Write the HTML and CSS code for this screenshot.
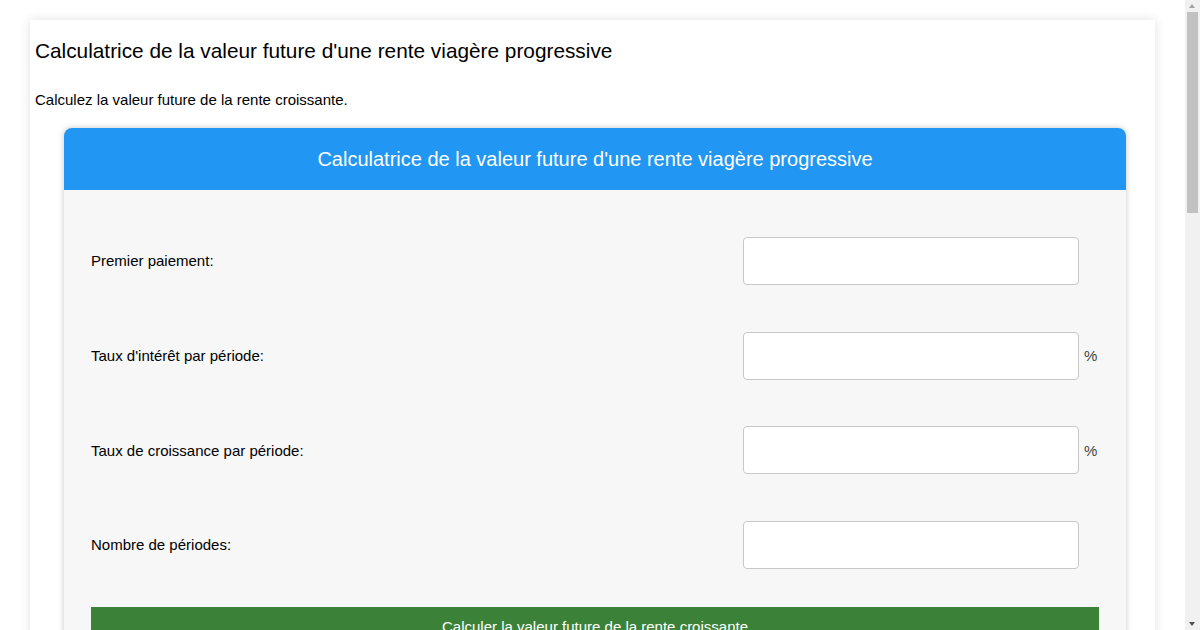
FILE: index.html
```html
<!DOCTYPE html>
<html lang="fr">
<head>
<meta charset="utf-8">
<title>Calculatrice de la valeur future d'une rente viagère progressive</title>
<link rel="stylesheet" href="styles.css">
</head>
<body>
<div class="page">
  <h1 class="title">Calculatrice de la valeur future d'une rente viagère progressive</h1>
  <p class="intro">Calculez la valeur future de la rente croissante.</p>
  <div class="card">
    <div class="card-head">Calculatrice de la valeur future d'une rente viagère progressive</div>
    <div class="card-body">
      <div class="row">
        <label class="label">Premier paiement:</label>
        <div class="field"><input class="input" type="text"><span class="unit"></span></div>
      </div>
      <div class="row">
        <label class="label">Taux d'intérêt par période:</label>
        <div class="field"><input class="input" type="text"><span class="unit">%</span></div>
      </div>
      <div class="row">
        <label class="label">Taux de croissance par période:</label>
        <div class="field"><input class="input" type="text"><span class="unit">%</span></div>
      </div>
      <div class="row">
        <label class="label">Nombre de périodes:</label>
        <div class="field"><input class="input" type="text"><span class="unit"></span></div>
      </div>
      <button class="btn" type="button">Calculer la valeur future de la rente croissante</button>
      <div class="result">
        <div class="row">
          <label class="label">Valeur future:</label>
          <div class="field"><input class="input" type="text"><span class="unit"></span></div>
        </div>
      </div>
    </div>
  </div>
  <div class="more">
    <h2>Formule</h2>
    <p>La valeur future d'une rente croissante est la valeur, à une date future, d'une série de paiements qui augmentent à un taux constant à chaque période.</p>
    <p>FV = P × ((1 + r)<sup>n</sup> − (1 + g)<sup>n</sup>) / (r − g)</p>
    <p>P = premier paiement, r = taux d'intérêt par période, g = taux de croissance par période, n = nombre de périodes.</p>
    <h2>Exemple</h2>
    <p>Supposons un premier paiement de 1 000, un taux d'intérêt de 5 % par période, un taux de croissance de 2 % par période et 10 périodes.</p>
    <p>La valeur future de la rente croissante est alors d'environ 14 231,63.</p>
  </div>
</div>
<div class="scrollbar" aria-hidden="true">
  <div class="sb-up"></div>
  <div class="sb-track"><div class="sb-thumb"></div></div>
  <div class="sb-down"></div>
</div>
</body>
</html>
```
FILE: styles.css
```css
html, body {
  margin: 0;
  padding: 0;
  background: #ffffff;
  font-family: "Liberation Sans", Arial, sans-serif;
  color: #000;
}
body {
  width: 1185px;
}
.page {
  margin: 20px 30px 40px 30px;
  padding: 5px 5px 900px 5px;
  background: #fff;
  box-shadow: 0 0 10px rgba(0, 0, 0, 0.12);
}
.title {
  font-size: 20.8px;
  font-weight: normal;
  margin: 13px 0 0 0;
  line-height: 26px;
}
.intro {
  font-size: 15px;
  margin: 27px 0 0 0;
  line-height: 18px;
}
.card {
  margin: 19px 24px 0 29px;
  border-radius: 8px;
  background: #f7f7f7;
  box-shadow: 0 0 6px rgba(0, 0, 0, 0.22);
  overflow: hidden;
}
.card-head {
  background: #2196f3;
  color: #fff;
  text-align: center;
  font-size: 20px;
  height: 62px;
  line-height: 62px;
}
.card-body {
  padding: 23.5px 27px 30px 27px;
}
.row {
  display: flex;
  align-items: center;
  justify-content: space-between;
  height: 94.7px;
}
.label {
  font-size: 15px;
}
.field {
  display: flex;
  align-items: center;
  width: 356px;
}
.input {
  box-sizing: border-box;
  width: 336px;
  height: 48px;
  border: 1px solid #c8c8c8;
  border-radius: 4px;
  background: #fff;
  margin: 0;
  padding: 0 10px;
  font-size: 15px;
}
.unit {
  margin-left: 5px;
  font-size: 15px;
  color: #444;
}
.btn {
  display: block;
  width: 100%;
  height: 40px;
  margin-top: 14.5px;
  border: none;
  background: #3b8238;
  color: #fff;
  font-family: "Liberation Sans", Arial, sans-serif;
  font-size: 15px;
  padding: 0;
}
.result {
  margin-top: 10px;
}
.more {
  padding: 20px 29px;
  font-size: 15px;
  line-height: 22px;
}
.more h2 {
  font-size: 19px;
  font-weight: normal;
}
.scrollbar {
  position: fixed;
  top: 0;
  right: 0;
  width: 15px;
  height: 100%;
  background: #f1f1f1;
  display: flex;
  flex-direction: column;
}
.sb-up, .sb-down {
  height: 12px;
  position: relative;
}
.sb-up::after {
  content: "";
  position: absolute;
  left: 4px;
  top: 4px;
  border-left: 3.5px solid transparent;
  border-right: 3.5px solid transparent;
  border-bottom: 4px solid #a3a3a3;
}
.sb-down::after {
  content: "";
  position: absolute;
  left: 4px;
  top: 4px;
  border-left: 3.5px solid transparent;
  border-right: 3.5px solid transparent;
  border-top: 4px solid #505050;
}
.sb-track {
  flex: 1;
  padding: 0 2px;
}
.sb-thumb {
  height: 201px;
  background: #c1c1c1;
}
```
